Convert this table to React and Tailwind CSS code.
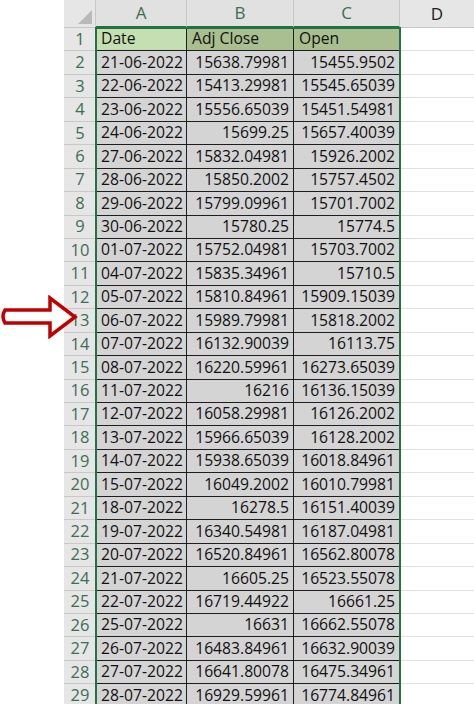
import React from "react";

const ROWS = [
  ["21-06-2022", "15638.79981", "15455.9502"],
  ["22-06-2022", "15413.29981", "15545.65039"],
  ["23-06-2022", "15556.65039", "15451.54981"],
  ["24-06-2022", "15699.25", "15657.40039"],
  ["27-06-2022", "15832.04981", "15926.2002"],
  ["28-06-2022", "15850.2002", "15757.4502"],
  ["29-06-2022", "15799.09961", "15701.7002"],
  ["30-06-2022", "15780.25", "15774.5"],
  ["01-07-2022", "15752.04981", "15703.7002"],
  ["04-07-2022", "15835.34961", "15710.5"],
  ["05-07-2022", "15810.84961", "15909.15039"],
  ["06-07-2022", "15989.79981", "15818.2002"],
  ["07-07-2022", "16132.90039", "16113.75"],
  ["08-07-2022", "16220.59961", "16273.65039"],
  ["11-07-2022", "16216", "16136.15039"],
  ["12-07-2022", "16058.29981", "16126.2002"],
  ["13-07-2022", "15966.65039", "16128.2002"],
  ["14-07-2022", "15938.65039", "16018.84961"],
  ["15-07-2022", "16049.2002", "16010.79981"],
  ["18-07-2022", "16278.5", "16151.40039"],
  ["19-07-2022", "16340.54981", "16187.04981"],
  ["20-07-2022", "16520.84961", "16562.80078"],
  ["21-07-2022", "16605.25", "16523.55078"],
  ["22-07-2022", "16719.44922", "16661.25"],
  ["25-07-2022", "16631", "16662.55078"],
  ["26-07-2022", "16483.84961", "16632.90039"],
  ["27-07-2022", "16641.80078", "16475.34961"],
  ["28-07-2022", "16929.59961", "16774.84961"],
];

const font = { fontFamily: "'Open Sans', 'Noto Sans', sans-serif" };

const RowHead = ({ n }) => (
  <div className="w-[32px] shrink-0 flex items-center justify-center border-b border-[#c8c8c8] bg-[#e6e6e6] text-[16.5px] text-[#3c6e52]">
    {n}
  </div>
);

const Cell = ({ children, right, bg = "bg-[#d4d4d4]", w }) => (
  <div className={`${w} shrink-0 flex items-center ${right ? "justify-end pr-[4px]" : "justify-start pl-[5px]"} border-b border-r border-[#1e1e1e] ${bg} text-[15.7px] text-[#111] overflow-hidden whitespace-nowrap`}>
    {children}
  </div>
);

const Arrow = () => (
  <svg width="80" height="44" viewBox="0 295 80 44" className="absolute left-0 top-[295px]">
    <path d="M5 310 L50 310 L50 298 L75 317 L50 336 L50 323 L5 323 Q1 316.5 5 310 Z" fill="#fff" stroke="#c00000" strokeWidth="3.5" strokeLinejoin="miter" />
  </svg>
);

export default function App() {
  return (
    <div className="relative w-[474px] h-[704px] overflow-hidden bg-white" style={font}>
      <div className="flex h-[28px]">
        <div className="w-[64px] shrink-0 bg-white" />
        <div className="relative w-[32px] shrink-0 bg-[#e6e6e6] border-r border-b border-[#c8c8c8]">
          <div className="absolute right-[3px] bottom-[3px] w-0 h-0 border-l-[14px] border-l-transparent border-b-[14px] border-b-[#b9b9b9]" />
        </div>
        {[["A", "w-[91px]"], ["B", "w-[107px]"], ["C", "w-[106px]"]].map(([l, w]) => (
          <div key={l} className={`${w} shrink-0 flex items-center justify-center bg-[#e1e1e1] border-r border-[#c8c8c8] border-b-2 border-b-[#217346] text-[17px] text-[#3c6e52]`}>
            {l}
          </div>
        ))}
        <div className="flex-1 flex items-center justify-center bg-[#e6e6e6] border-b border-[#c8c8c8] text-[17px] text-[#222]">
          <span className="w-[74px] text-center">D</span>
        </div>
      </div>

      <div className="flex h-[23.45px]">
        <div className="w-[64px] shrink-0" />
        <RowHead n={1} />
        <Cell w="w-[91px]" bg="bg-[#c6dfb2]">Date</Cell>
        <Cell w="w-[107px]" bg="bg-[#a9bf8f]">Adj Close</Cell>
        <Cell w="w-[106px]" bg="bg-[#a9bf8f]">Open</Cell>
        <div className="flex-1 border-b border-[#e1e1e1]" />
      </div>

      {ROWS.map((r, i) => (
        <div key={i} className="flex h-[23.45px]">
          <div className="w-[64px] shrink-0" />
          <RowHead n={i + 2} />
          <Cell w="w-[91px]">{r[0]}</Cell>
          <Cell w="w-[107px]" right>{r[1]}</Cell>
          <Cell w="w-[106px]" right>{r[2]}</Cell>
          <div className="flex-1 border-b border-[#e1e1e1]" />
        </div>
      ))}

      <div className="absolute left-[95px] top-[27px] w-[306px] h-[700px] border-2 border-[#217346] pointer-events-none" />
      <Arrow />
    </div>
  );
}
